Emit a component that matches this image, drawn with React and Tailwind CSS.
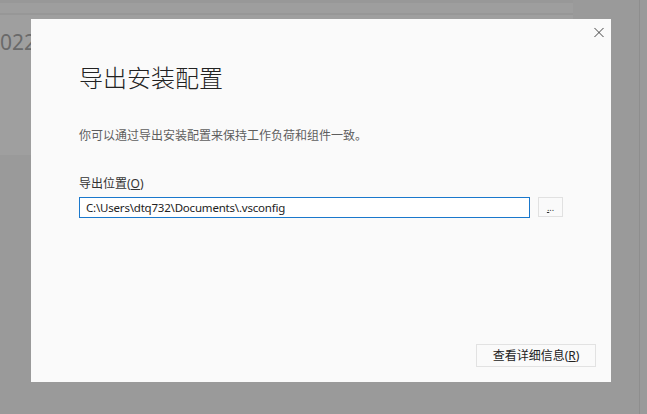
export default function App() {
  const cjk = { fontFamily: '"Noto Sans", "Noto Sans CJK SC", sans-serif' };
  return (
    <div className="relative w-[647px] h-[414px] overflow-hidden bg-[#9a9a9a]" style={cjk}>
      {/* background page under the overlay */}
      <div className="flex h-full">
        <div className="flex flex-col w-[573px]">
          <div className="h-[3px] bg-[#989898]" />
          <div className="h-[10px] bg-[#9e9e9e]" />
          <div className="h-[2px] bg-[#979797]" />
          <div className="h-[140px] bg-[#9f9f9f] pt-[13px]">
            <div className="text-[21px] leading-[28px] text-[#6a6a6a] -ml-[12px]">2022</div>
          </div>
          <div className="flex-1 bg-[#9a9a9a]" />
        </div>
        <div className="w-[66px] bg-[#9a9a9a]" />
        <div className="w-[1px] bg-[#8e8e8e]" />
        <div className="flex-1 bg-[#9a9a9a]" />
      </div>

      {/* dialog */}
      <div className="absolute left-[31px] top-[19px] w-[580px] h-[363px] bg-[#fafafa] flex flex-col pl-[48px] pr-[15px]">
        <button className="absolute right-[7px] top-[8px] w-[10px] h-[10px] p-0 flex items-center justify-center">
          <svg width="11" height="11" viewBox="0 0 11 11">
            <path d="M0.5 0.5 L10.5 10.5 M10.5 0.5 L0.5 10.5" stroke="#333" strokeWidth="1" fill="none" />
          </svg>
        </button>
        <div className="mt-[47px] text-[24px] leading-[24px] font-light text-[#222]">导出安装配置</div>
        <div className="mt-[40px] text-[12px] leading-[12px] text-[#5e5e5e]">你可以通过导出安装配置来保持工作负荷和组件一致。</div>
        <div className="mt-[35px] text-[12px] leading-[14px] text-[#333]">
          导出位置(<span className="underline">O</span>)
        </div>
        <div className="mt-[6px] flex items-start gap-[8px]">
          <div className="w-[451px] h-[21px] border border-[#1a78cc] bg-white flex items-center pl-[6px] text-[11.5px] tracking-[-0.2px] text-[#222]">
            C:\Users\dtq732\Documents\.vsconfig
          </div>
          <div className="w-[25px] h-[20px] border border-[#e1e1e1] bg-[#fafafa] flex items-end justify-center pb-[4px] text-[9px] leading-[9px] text-[#333]">
            <span><span className="underline">.</span>..</span>
          </div>
        </div>
        <div className="flex-1" />
        <div className="flex justify-end mb-[15px]">
          <div className="w-[120px] h-[23px] border border-[#e2e2e2] bg-[#fafafa] flex items-center justify-center text-[12px] text-[#222]">
            查看详细信息(<span className="underline">R</span>)
          </div>
        </div>
      </div>
    </div>
  );
}
